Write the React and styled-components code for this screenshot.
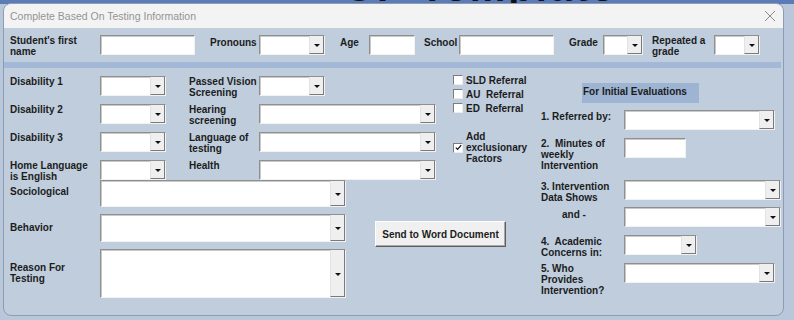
import React from 'react';
import styled, { createGlobalStyle } from 'styled-components';

const GlobalStyle = createGlobalStyle`
  html, body {
    margin: 0;
    padding: 0;
  }
  body {
    width: 794px;
    height: 320px;
    overflow: hidden;
    background: #b9c7db;
    font-family: "Liberation Sans", Arial, sans-serif;
  }
`;

const Desk = styled.div`
  position: relative;
  width: 794px;
  height: 320px;
  overflow: hidden;
  box-sizing: border-box;
  padding: 3px 0 0 3px;
  background: linear-gradient(#5b7cb6 0 4px, #b9c7db 4px);
`;

// sheet heading behind the form, only its foot shows above the dialog
const SheetTitle = styled.div`
  position: absolute;
  left: 345px;
  top: -35px;
  font: bold 40px "Liberation Sans", Arial, sans-serif;
  letter-spacing: 3px;
  color: #111;
`;

const Dialog = styled.div`
  position: relative;
  z-index: 1;
  width: 781px;
  height: 313px;
  box-sizing: border-box;
  border: 1px solid #8e9cb2;
  border-radius: 8px;
  background: #bfcddd;
  overflow: hidden;
  display: flex;
  flex-direction: column;
`;

const TitleBar = styled.div`
  height: 24px;
  flex: none;
  display: flex;
  align-items: center;
  justify-content: space-between;
  padding: 0 7px 0 6px;
  background: #f3f3f3;
  font: 10.5px "Liberation Sans", Arial, sans-serif;
  color: #939393;
`;

const CloseIcon = () => (
  <svg width="12" height="12" viewBox="0 0 12 12">
    <path d="M1 1 L11 11 M11 1 L1 11" stroke="#8a8a8a" strokeWidth="1" fill="none" />
  </svg>
);

const TopRow = styled.div`
  height: 34px;
  box-sizing: border-box;
  display: flex;
  align-items: flex-start;
  padding: 7px 0 0 6px;
`;

const Separator = styled.div`
  height: 6px;
  margin-right: 2px;
  background: #a2b8d6;
`;

const Label = styled.div`
  box-sizing: border-box;
  width: ${p => (p.$w ? `${p.$w}px` : 'auto')};
  margin-left: ${p => p.$ml || 0}px;
  padding-top: ${p => p.$pt || 0}px;
  padding-left: ${p => p.$pl || 0}px;
  font-size: 10px;
  line-height: 11px;
  font-weight: bold;
  color: #1c1c1c;
  white-space: pre;
`;

const SubLabel = styled(Label)`
  grid-column: 4;
`;

const sunken = `
  box-sizing: border-box;
  background: #fff;
  border: 1px solid;
  border-color: #8f8f8f #f2f2f2 #f2f2f2 #8f8f8f;
  box-shadow: inset 1px 1px 0 #c9c9c9;
`;

const TextBox = styled.div`
  ${sunken}
  width: ${p => p.$w}px;
  height: ${p => p.$h || 20}px;
  flex: none;
`;

const ComboShell = styled.div`
  ${sunken}
  display: flex;
  justify-content: flex-end;
  width: ${p => p.$w}px;
  height: ${p => p.$h || 20}px;
  flex: none;
`;

const DropButton = styled.div`
  width: 15px;
  box-sizing: border-box;
  background: #efefef;
  border-left: 1px solid #e2e2e2;
  border-right: 1px solid #7a7a7a;
  border-bottom: 1px solid #7a7a7a;
  display: flex;
  align-items: center;
  justify-content: center;
  padding-top: 2px;
`;

const Arrow = styled.span`
  width: 0;
  height: 0;
  border-left: 3px solid transparent;
  border-right: 3px solid transparent;
  border-top: 3px solid #111;
`;

const Combo = ({ w, h }) => (
  <ComboShell $w={w} $h={h}>
    <DropButton>
      <Arrow />
    </DropButton>
  </ComboShell>
);

const Main = styled.div`
  flex: 1;
  display: grid;
  grid-template-columns: 441px 96px 1fr;
  grid-template-rows: 112px 1fr;
`;

const UpperLeft = styled.div`
  display: grid;
  grid-template-columns: 90px 66px 23px 70px 177px;
  grid-auto-rows: 20px;
  row-gap: 8px;
  align-items: start;
  padding: 8px 0 0 6px;
`;

const LowerLeft = styled.div`
  grid-column: 1 / span 2;
  display: grid;
  grid-template-columns: 90px 246px auto;
  grid-template-rows: 27px 28px 49px;
  row-gap: 7px;
  align-items: start;
  padding-left: 6px;
`;

const WordButton = styled.button`
  width: 131px;
  height: 26px;
  margin: 7px 0 0 29px;
  padding: 0;
  box-sizing: border-box;
  background: #f0f0f0;
  border: 1px solid;
  border-color: #ffffff #5f5f5f #5f5f5f #ffffff;
  box-shadow: inset -1px -1px 0 #a8a8a8;
  font: bold 10px "Liberation Sans", Arial, sans-serif;
  color: #1c1c1c;
`;

const CheckColumn = styled.div`
  padding: 5px 0 0 8px;
  display: flex;
  flex-direction: column;
`;

const CheckRow = styled.div`
  display: flex;
  align-items: center;
  gap: 3px;
  min-height: 14px;
  margin-top: ${p => p.$mt || 0}px;
`;

const Box = styled.span`
  width: 10px;
  height: 10px;
  flex: none;
  box-sizing: border-box;
  background: #fff;
  border: 1px solid;
  border-color: #7c7c7c #ececec #ececec #7c7c7c;
  display: flex;
  align-items: center;
  justify-content: center;
`;

const Tick = () => (
  <svg width="7" height="7" viewBox="0 0 7 7">
    <path d="M0.8 3.6 L2.6 5.4 L6.2 1.2" stroke="#111" strokeWidth="1.3" fill="none" />
  </svg>
);

const RightColumn = styled.div`
  grid-row: 1 / span 2;
  grid-column: 3;
  padding-top: 15px;
`;

const SectionTag = styled.div`
  width: 117px;
  height: 20px;
  box-sizing: border-box;
  margin-left: 41px;
  padding: 3px 0 0 1px;
  background: #9db4d3;
  font-size: 10px;
  line-height: 11px;
  font-weight: bold;
  color: #1c1c1c;
`;

const RightGrid = styled.div`
  display: grid;
  grid-template-columns: 83px auto;
  grid-template-rows: 20px 34px 19px 20px 20px 20px;
  row-gap: 8px;
  align-items: start;
  margin-top: 7px;
`;

const App = () => (
  <>
    <GlobalStyle />
    <Desk>
      <SheetTitle>UP Template</SheetTitle>
      <Dialog>
        <TitleBar>
          <span>Complete Based On Testing Information</span>
          <CloseIcon />
        </TitleBar>

        <TopRow>
          <Label $w={90}>{"Student's first\nname"}</Label>
          <TextBox $w={95} />
          <Label $w={49} $ml={15} $pt={2}>Pronouns</Label>
          <Combo w={66} />
          <Label $w={29} $ml={15} $pt={2}>Age</Label>
          <TextBox $w={46} />
          <Label $w={35} $ml={9} $pt={2}>School</Label>
          <TextBox $w={95} />
          <Label $w={34} $ml={15} $pt={2}>Grade</Label>
          <Combo w={40} />
          <Label $w={62} $ml={9}>{"Repeated a\ngrade"}</Label>
          <Combo w={46} />
        </TopRow>
        <Separator />

        <Main>
          <UpperLeft>
            <Label>Disability 1</Label>
            <Combo w={66} />
            <SubLabel>{"Passed Vision\nScreening"}</SubLabel>
            <Combo w={66} />

            <Label>Disability 2</Label>
            <Combo w={66} />
            <SubLabel>{"Hearing\nscreening"}</SubLabel>
            <Combo w={177} />

            <Label>Disability 3</Label>
            <Combo w={66} />
            <SubLabel>{"Language of\ntesting"}</SubLabel>
            <Combo w={177} />

            <Label>{"Home Language\nis English"}</Label>
            <Combo w={66} />
            <SubLabel>Health</SubLabel>
            <Combo w={177} />
          </UpperLeft>

          <CheckColumn>
            <CheckRow>
              <Box />
              <Label>SLD Referral</Label>
            </CheckRow>
            <CheckRow>
              <Box />
              <Label>{"AU  Referral"}</Label>
            </CheckRow>
            <CheckRow>
              <Box />
              <Label>{"ED  Referral"}</Label>
            </CheckRow>
            <CheckRow $mt={16}>
              <Box>
                <Tick />
              </Box>
              <Label>{"Add\nexclusionary\nFactors"}</Label>
            </CheckRow>
          </CheckColumn>

          <RightColumn>
            <SectionTag>For Initial Evaluations</SectionTag>
            <RightGrid>
              <Label $pt={1}>1. Referred by:</Label>
              <Combo w={151} />

              <Label>{"2.  Minutes of\nweekly\nIntervention"}</Label>
              <TextBox $w={62} />

              <Label $pt={1}>{"3. Intervention\nData Shows"}</Label>
              <Combo w={157} />

              <Label $pt={2} $pl={21}>and -</Label>
              <Combo w={157} />

              <Label $pt={1}>{"4.  Academic\nConcerns in:"}</Label>
              <Combo w={73} />

              <Label>{"5. Who\nProvides\nIntervention?"}</Label>
              <Combo w={151} />
            </RightGrid>
          </RightColumn>

          <LowerLeft>
            <Label $pt={6}>Sociological</Label>
            <Combo w={246} h={27} />
            <span />

            <Label $pt={8}>Behavior</Label>
            <Combo w={246} h={28} />
            <WordButton>Send to Word Document</WordButton>

            <Label $pt={13}>{"Reason For\nTesting"}</Label>
            <Combo w={246} h={49} />
            <span />
          </LowerLeft>
        </Main>
      </Dialog>
    </Desk>
  </>
);

export default App;
